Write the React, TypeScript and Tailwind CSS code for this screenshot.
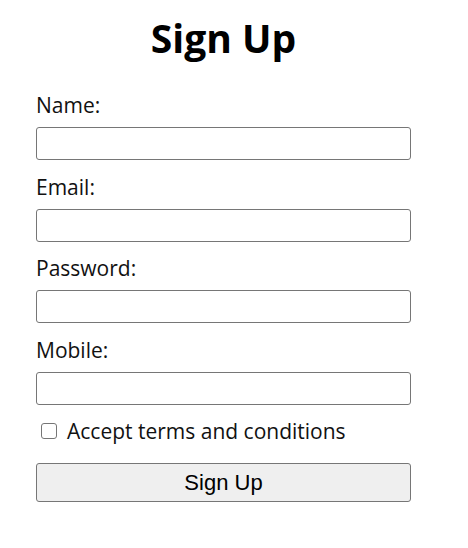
import { useState } from "react";

const campos = [
  { id: "name", label: "Name:", type: "text" },
  { id: "email", label: "Email:", type: "email" },
  { id: "password", label: "Password:", type: "password" },
  { id: "mobile", label: "Mobile:", type: "tel" },
];

export default function App() {
  const [form, setForm] = useState<Record<string, string>>({
    name: "",
    email: "",
    password: "",
    mobile: "",
  });
  const [aceito, setAceito] = useState(false);

  return (
    <div className="min-h-[548px] bg-white text-black font-['Open_Sans',sans-serif]">
      <form
        onSubmit={(e) => e.preventDefault()}
        className="ml-[36px] w-[375px] pt-[11px]"
      >
        <h1 className="text-center text-[39px] leading-[53px] font-bold">
          Sign Up
        </h1>

        <div className="mt-[27px] flex flex-col gap-[12.3px]">
          {campos.map((c) => (
            <div key={c.id}>
              <label
                htmlFor={c.id}
                className="block text-[21px] leading-[28px] mb-[8.3px] text-[#111]"
              >
                {c.label}
              </label>
              <input
                id={c.id}
                type={c.type}
                value={form[c.id]}
                onChange={(e) => setForm({ ...form, [c.id]: e.target.value })}
                className="block w-full h-[33px] border border-[#767676] rounded-[3px] bg-white px-2 text-[18px] outline-none"
              />
            </div>
          ))}
        </div>

        {/* Termos */}
        <label className="mt-[12px] flex items-center h-[28px] cursor-pointer">
          <input
            type="checkbox"
            checked={aceito}
            onChange={(e) => setAceito(e.target.checked)}
            className="appearance-none ml-[5px] w-4 h-4 border border-[#767676] rounded-[3px] bg-white checked:bg-blue-600"
          />
          <span className="ml-[10px] text-[21px] leading-[28px] text-[#111]">
            Accept terms and conditions
          </span>
        </label>

        <button
          type="submit"
          className="mt-[18px] block w-full h-[39px] border border-[#767676] rounded-[3px] bg-[#efefef] text-[22px] text-black font-['Liberation_Sans',Arial,sans-serif]"
        >
          Sign Up
        </button>
      </form>
    </div>
  );
}
